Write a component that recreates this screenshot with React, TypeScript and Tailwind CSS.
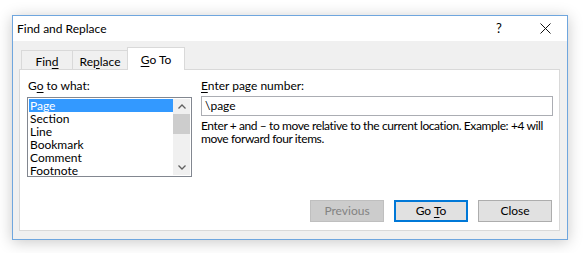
import React from 'react';

const ITEMS = ['Page', 'Section', 'Line', 'Bookmark', 'Comment', 'Footnote'];

function Key({ children }: { children: React.ReactNode }) {
  return <span className="underline underline-offset-2 decoration-1">{children}</span>;
}

function Tab({ children, active, w }: { children: React.ReactNode; active?: boolean; w: string }) {
  return (
    <div
      className={`${w} flex items-center justify-center border border-b-0 border-[#d9d9d9] ${
        active ? 'h-[23px] bg-white relative z-10' : 'h-[20px] bg-[#f0f0f0] -ml-px first:ml-0'
      }`}
    >
      <span className={active ? 'mt-[1px]' : 'mt-[2px]'}>{children}</span>
    </div>
  );
}

function Chevron({ up }: { up?: boolean }) {
  return (
    <svg width="8" height="5" viewBox="0 0 8 5" className="text-[#606060]">
      <path d={up ? 'M0.5 4.5 L4 1 L7.5 4.5' : 'M0.5 0.5 L4 4 L7.5 0.5'} fill="none" stroke="currentColor" strokeWidth="1.3" />
    </svg>
  );
}

export default function App() {
  return (
    <div
      className="w-[584px] h-[253px] bg-white pl-[12px] pt-[15px] text-[12px] text-black"
      style={{ fontFamily: 'Lato, "Noto Sans", Arial, sans-serif' }}
    >
      <div className="w-[556px] h-[225px] border border-[#6fa6de] bg-[#f0f0f0] flex flex-col shadow-[0_2px_14px_rgba(0,0,0,0.22)]">
        {/* title bar */}
        <div className="h-[25px] bg-white flex items-center pl-[4px]">
          <span className="flex-1 leading-none">Find and Replace</span>
          <span className="w-[12px] text-center text-[13px] leading-none mr-[35px]">?</span>
          <svg width="11" height="11" viewBox="0 0 11 11" className="mr-[16px]">
            <path d="M0.5 0.5 L10.5 10.5 M10.5 0.5 L0.5 10.5" stroke="#111" strokeWidth="1" />
          </svg>
        </div>

        {/* body */}
        <div className="flex-1 flex flex-col pt-[6px] pl-[6px] pr-[7px] pb-[8px]">
          <div className="flex items-end pl-[2px] -mb-px">
            <Tab w="w-[52px]"><>Fin<Key>d</Key></></Tab>
            <Tab w="w-[56px]"><>Re<Key>p</Key>lace</></Tab>
            <Tab w="w-[58px] -ml-px" active><><Key>G</Key>o To</></Tab>
          </div>

          <div className="flex-1 bg-white border border-[#d9d9d9] flex flex-col pl-[7px] pr-[6px] pt-[8px] pb-[8px]">
            <div className="flex gap-[9px]">
              {/* left */}
              <div className="w-[165px] flex flex-col">
                <div className="h-[16px] leading-[16px] mb-[3px] pl-[1px]">G<Key>o</Key> to what:</div>
                <div className="h-[80px] border border-[#828790] flex p-px">
                  <div className="flex-1 flex flex-col">
                    {ITEMS.map((it, i) => (
                      <div
                        key={it}
                        className={`h-[13px] leading-[13px] pl-[1px] ${i === 0 ? 'bg-[#3399ff] text-white' : ''}`}
                      >
                        {it}
                      </div>
                    ))}
                  </div>
                  <div className="w-[17px] bg-[#f0f0f0] flex flex-col items-center">
                    <div className="h-[15px] flex items-center justify-center"><Chevron up /></div>
                    <div className="w-full h-[20px] bg-[#cdcdcd]" />
                    <div className="flex-1" />
                    <div className="h-[15px] flex items-center justify-center"><Chevron /></div>
                  </div>
                </div>
              </div>

              {/* right */}
              <div className="flex-1 min-w-0 flex flex-col">
                <div className="h-[16px] leading-[16px] mb-[2px]"><Key>E</Key>nter page number:</div>
                <div className="h-[20px] border border-[#abadb3] flex items-center pl-[3px]">\page</div>
                <div className="mt-[3px] leading-[13px] flex flex-col tracking-[-0.4px]">
                  <span className="whitespace-nowrap">Enter + and – to move relative to the current location. Example: +4 will</span>
                  <span className="whitespace-nowrap">move forward four items.</span>
                </div>
              </div>
            </div>

            <div className="mt-auto flex justify-end gap-[10px] pr-[1px]">
              <button className="w-[74px] h-[22px] bg-[#cccccc] border border-[#bfbfbf] text-[#838383]">Previous</button>
              <button className="w-[74px] h-[22px] bg-[#e1e1e1] border-2 border-[#0078d7]">Go <Key>T</Key>o</button>
              <button className="w-[74px] h-[22px] bg-[#e1e1e1] border border-[#adadad]">Close</button>
            </div>
          </div>
        </div>
      </div>
    </div>
  );
}
